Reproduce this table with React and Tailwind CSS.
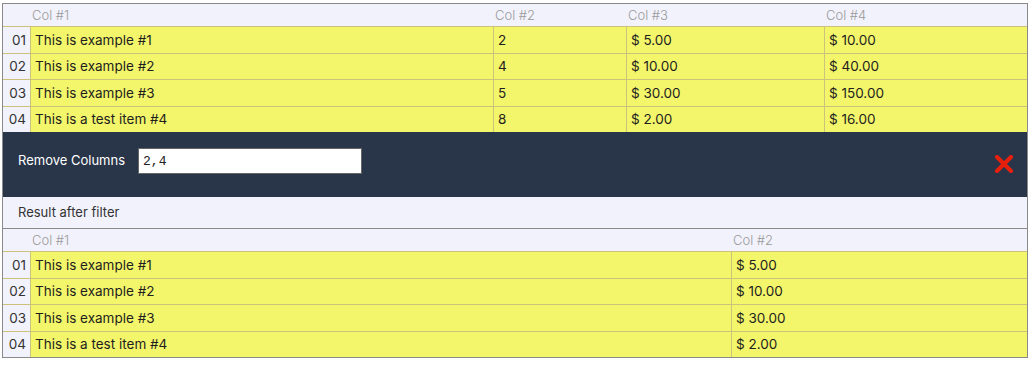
const ROWS = [
  { id: "01", name: "This is example #1", qty: "2", price: "$ 5.00", total: "$ 10.00" },
  { id: "02", name: "This is example #2", qty: "4", price: "$ 10.00", total: "$ 40.00" },
  { id: "03", name: "This is example #3", qty: "5", price: "$ 30.00", total: "$ 150.00" },
  { id: "04", name: "This is a test item #4", qty: "8", price: "$ 2.00", total: "$ 16.00" }
];

const cell = "border-l border-[#cbc27c] bg-[#f3f56b] pl-[4px] flex items-center";

const HeaderRow = ({ cols, labels }) => (
  <div className={`grid ${cols} h-[22px] bg-[#f2f2fc] text-[13px] font-light text-[#9a9a9a]`}>
    <div />
    {labels.map(label => (
      <div key={label} className="flex items-center pl-[2px] pt-[2px]">{label}</div>
    ))}
  </div>
);

const DataTable = ({ cols, labels, rows }) => (
  <div>
    <HeaderRow cols={cols} labels={labels} />
    {rows.map(row => (
      <div key={row[0]} className={`grid ${cols} h-[26.5px] border-t border-[#cbc27c] text-[13.5px] text-[#1e1e1e]`}>
        <div className="flex items-center justify-end bg-[#f2f2fc] pr-[4px] text-[#333]">{row[0]}</div>
        {row.slice(1).map((value, i) => (
          <div key={i} className={cell}>{value}</div>
        ))}
      </div>
    ))}
  </div>
);

export default function App() {
  const full = ROWS.map(r => [r.id, r.name, r.qty, r.price, r.total]);
  const filtered = ROWS.map(r => [r.id, r.name, r.price]);

  return (
    <div className="min-h-screen bg-white pl-[2px] pr-[7px] pt-[3px] font-['Inter',sans-serif]">
      <div className="border border-[#8a8a8a]">
        <DataTable
          cols="grid-cols-[27px_463px_133px_198px_1fr]"
          labels={["Col #1", "Col #2", "Col #3", "Col #4"]}
          rows={full}
        />
        <div className="flex h-[65px] items-start bg-[#293549] pl-[15px] pr-[13px] pt-[16px]">
          <div className="flex items-center">
            <span className="text-[13px] text-white">Remove Columns</span>
            <input
              defaultValue="2,4"
              className="ml-[13px] h-[26px] w-[224px] border border-[#666] bg-white px-[4px] font-['Liberation_Mono',monospace] text-[13px] text-[#222] outline-none"
            />
          </div>
          <svg className="ml-auto mt-[7px]" width="20" height="18" viewBox="0 0 20 18">
            <path d="M3 2 L17 16 M17 2 L3 16" stroke="#e6200c" strokeWidth="4.2" strokeLinecap="round" />
          </svg>
        </div>
        <div className="flex h-[32px] items-center border-b border-[#8a8a8a] bg-[#f2f2fc] pl-[15px] text-[13px] text-[#333]">
          Result after filter
        </div>
        <DataTable
          cols="grid-cols-[27px_701px_1fr]"
          labels={["Col #1", "Col #2"]}
          rows={filtered}
        />
      </div>
    </div>
  );
}
